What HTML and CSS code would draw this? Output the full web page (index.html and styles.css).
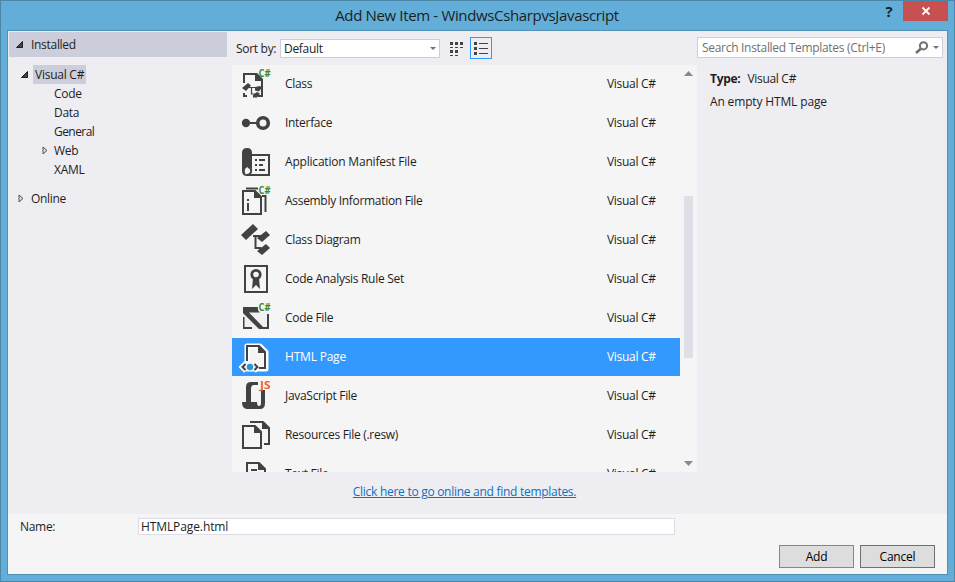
FILE: index.html
```html
<!DOCTYPE html>
<html>

<head>
	<meta charset="utf-8" />
	<title>Add New Item - WindwsCsharpvsJavascript</title>
	<link rel="stylesheet" href="styles.css">
</head>

<body>
	<div class="window">
		<div class="titlebar">
			<h1 class="title">Add New Item - WindwsCsharpvsJavascript</h1>
			<span class="help">?</span>
			<span class="close">
				<svg width="10" height="10" viewBox="0 0 10 10"><path d="M1.5 1.5l7 7M8.5 1.5l-7 7" stroke="#fff" stroke-width="1.8" /></svg>
			</span>
		</div>
		<div class="client">
			<div class="main">
				<!-- categories -->
				<div class="sidebar">
					<div class="installed">
						<svg class="arrow" width="7" height="7"><path d="M6.5 0.5v6h-6z" fill="#444" stroke="#1e1e1e" /></svg>
						<span>Installed</span>
					</div>
					<div class="tree">
						<div class="node root">
							<svg class="arrow" width="7" height="7"><path d="M6.5 0.5v6h-6z" fill="#444" stroke="#1e1e1e" /></svg>
							<span class="current">Visual C#</span>
						</div>
						<div class="node">Code</div>
						<div class="node">Data</div>
						<div class="node general">General</div>
						<div class="node branch">
							<svg class="arrow" width="6" height="9"><path d="M1 1v7l4-3.5z" fill="#ddd" stroke="#555" /></svg>
							<span>Web</span>
						</div>
						<div class="node">XAML</div>
						<div class="node online">
							<svg class="arrow" width="6" height="9"><path d="M1 1v7l4-3.5z" fill="#ddd" stroke="#555" /></svg>
							<span>Online</span>
						</div>
					</div>
				</div>

				<!-- templates -->
				<div class="center">
					<div class="toolbar">
						<label class="sort-label">Sort by:</label>
						<div class="combo">
							<span>Default</span>
							<svg width="6" height="3"><path d="M0 0h6l-3 3z" fill="#717171" /></svg>
						</div>
						<svg class="view-small" width="14" height="15" fill="#424242" shape-rendering="crispEdges">
							<path d="M0 1h3v3H0zM5 1h3v3H5zM10 1h3v3h-3zM0 9h3v3H0zM5 9h3v3H5zM0 6h3v1H0zM5 6h3v1H5zM10 6h3v1h-3zM0 14h3v1H0zM5 14h3v1H5z" />
						</svg>
						<span class="view-list">
							<svg width="14" height="13" fill="#424242" shape-rendering="crispEdges">
								<path d="M0 0h3v3H0zM0 5h3v3H0zM0 10h3v3H0zM5 1h9v1H5zM5 6h9v1H5zM5 11h9v1H5z" />
							</svg>
						</span>
					</div>
					<div class="list">
						<div class="items">
							<div class="item">
								<svg class="icon" viewBox="0 0 32 32">
									<path class="line" d="M4 15V6h11M22 12v16h-4M4 25v3h3" />
									<path class="solid" d="M15 5h2l6 6v2h-8z" />
									<path class="solid" d="M2 20l6-5 3 2.500-5 5.500zM15 19l5-1 2 1.500-3 4-4-1zM13 27l4-3 3 1.500-3 4h-4z" />
									<path class="thin" d="M8 19.500h8M11.500 19.500v6.500h4" />
									<text class="cs" x="18.500" y="9" textLength="12" lengthAdjust="spacingAndGlyphs">C#</text>
								</svg>
								<span class="name">Class</span><span class="lang">Visual C#</span>
							</div>
							<div class="item">
								<svg class="icon" viewBox="0 0 32 32">
									<path class="line" d="M6 16h12" />
									<circle class="solid" cx="6" cy="16" r="4.2" />
									<circle cx="23" cy="16" r="5.3" fill="#f5f5f5" stroke="#424242" stroke-width="3.6" />
								</svg>
								<span class="name">Interface</span><span class="lang">Visual C#</span>
							</div>
							<div class="item">
								<svg class="icon" viewBox="0 0 32 32">
									<path class="line" d="M11 9h18v20H6" />
									<path class="solid" d="M2 7q0-5 5-5t5 5v16q-4-4-7 0-1 4 2 7-5 0-5-5z" />
									<path class="line" d="M8 21q4 1 3 5-1 3-4 3" />
									<path class="line" d="M15 14h2M19 14h6M15 19h2M19 19h4M15 24h2M19 24h6" />
								</svg>
								<span class="name wide">Application Manifest File</span><span class="lang">Visual C#</span>
							</div>
							<div class="item">
								<svg class="icon" viewBox="0 0 32 32">
									<path class="line" d="M6 3.5h12M25.5 10v17M22 11h3" />
									<path class="line" d="M3 6h12l6 6v17H3z" />
									<path class="solid" d="M14 5v8h8zM7 14h2v2H7zM7 18h2v8H7z" />
									<text class="cs" x="18.500" y="9" textLength="12" lengthAdjust="spacingAndGlyphs">C#</text>
								</svg>
								<span class="name">Assembly Information File</span><span class="lang">Visual C#</span>
							</div>
							<div class="item">
								<svg class="icon" viewBox="0 0 32 32">
									<path class="line" d="M13 12h9M15.5 12v12h6" />
									<path class="solid" d="M1 11L13 0l5 5L6 16zM17 14l9-7 4 4-8 7zM17 27l9-7 4 4-8 7z" />
								</svg>
								<span class="name">Class Diagram</span><span class="lang">Visual C#</span>
							</div>
							<div class="item">
								<svg class="icon" viewBox="0 0 32 32">
									<rect class="line" x="5" y="3" width="22" height="26" />
									<circle cx="16" cy="11.5" r="4.2" fill="none" stroke="#424242" stroke-width="2.8" />
									<path class="solid" d="M13 15h6l1 11-4-4-4 4z" />
								</svg>
								<span class="name">Code Analysis Rule Set</span><span class="lang">Visual C#</span>
							</div>
							<div class="item">
								<svg class="icon" viewBox="0 0 32 32">
									<path fill="#f0eff1" d="M3 6h25v21H3z" />
									<path class="solid" d="M3 5h15q-1 3 2 5.500H9L25 27h-6L3 11z" />
									<path class="line" d="M23 26h5V12" />
									<path class="solid" d="M3 15h1.500v10H12v2H3z" />
									<text class="cs" x="18.500" y="9" textLength="12" lengthAdjust="spacingAndGlyphs">C#</text>
								</svg>
								<span class="name">Code File</span><span class="lang">Visual C#</span>
							</div>
							<div class="item selected">
								<svg class="icon" viewBox="0 0 32 32">
									<path fill="#f5f5f5" stroke="#fff" stroke-width="5" stroke-linejoin="round" d="M7 5h13l6 6v17H7z" />
									<path fill="none" stroke="#fff" stroke-width="5" d="M6 22l-4 4 4 4M14 22l4 4-4 4" />
									<path class="line" d="M7 20V5h12l6 6v16h-6" />
									<path class="solid" d="M18 4v8h8z" />
									<path fill="#f5f5f5" d="M4 21h12v9H4z" />
									<path class="line" d="M5.500 23l-3 3 3 3M14.500 23l3 3-3 3" />
									<circle cx="10" cy="26" r="3.200" fill="#1b9bdc" />
								</svg>
								<span class="name wide">HTML Page</span><span class="lang">Visual C#</span>
							</div>
							<div class="item">
								<svg class="icon" viewBox="0 0 32 32">
									<path class="solid" d="M6 22V7q0-5 5-5h7v3h-4q-3 0-3 4v13z" />
									<path class="solid" d="M2 22h15q0 4 2 4t2-3V10h4v13q0 6-5 6H7q-5 0-5-7z" />
									<text class="js" x="20" y="9" textLength="10.500" lengthAdjust="spacingAndGlyphs">JS</text>
								</svg>
								<span class="name">JavaScript File</span><span class="lang">Visual C#</span>
							</div>
							<div class="item">
								<svg class="icon" viewBox="0 0 32 32">
									<path class="line" d="M10 3h13l6 6v16h-5" />
									<path class="solid" d="M22 2v8h8zM14 6v8h8z" />
									<path class="line" d="M3 7h12l6 6v16H3z" />
								</svg>
								<span class="name">Resources File (.resw)</span><span class="lang">Visual C#</span>
							</div>
							<div class="item">
								<svg class="icon" viewBox="0 0 32 32">
									<path class="line" d="M7 5h12l6 6v17H7zM11 12h6M11 16h10" />
									<path class="solid" d="M18 4v8h8z" />
								</svg>
								<span class="name">Text File</span><span class="lang">Visual C#</span>
							</div>
						</div>
						<div class="scrollbar">
							<svg width="9" height="5"><path d="M0 5h9L4.500 0z" fill="#868999" /></svg>
							<div class="thumb"></div>
							<svg width="9" height="5"><path d="M0 0h9L4.500 5z" fill="#868999" /></svg>
						</div>
					</div>
					<div class="online-link"><a href="#">Click here to go online and find templates.</a></div>
				</div>

				<!-- details -->
				<div class="details">
					<div class="search">
						<span>Search Installed Templates (Ctrl+E)</span>
						<svg class="magnifier" width="14" height="13" fill="none" stroke="#717171">
							<circle cx="8.500" cy="4.800" r="3.600" stroke-width="2" />
							<path d="M6 7.500l-5 4.500" stroke-width="2.600" />
						</svg>
						<svg width="6" height="3"><path d="M0 0h6l-3 3z" fill="#717171" /></svg>
					</div>
					<div class="type"><b>Type:</b><span>Visual C#</span></div>
					<div class="description">An empty HTML page</div>
				</div>
			</div>

			<div class="footer">
				<div class="name-row">
					<label class="name-label" for="filename">Name:</label>
					<input id="filename" class="filename" type="text" value="HTMLPage.html" />
				</div>
				<div class="buttons">
					<button class="button primary">Add</button>
					<button class="button">Cancel</button>
				</div>
			</div>
		</div>
	</div>
</body>

</html>
```
FILE: styles.css
```css
* {
	box-sizing: border-box;
}

body {
	margin: 0;
	font: 12px/19px "Open Sans", "Noto Sans", sans-serif;
	letter-spacing: -0.3px;
	color: #1e1e1e;
}

svg {
	display: block;
	flex: none;
}

.window {
	width: 955px;
	height: 582px;
	padding: 0 6px 6px;
	background-color: #62aed8;
	border: 1px solid #4a87a9;
	overflow: hidden;
	white-space: nowrap;
}

/* title bar */
.titlebar {
	display: flex;
	height: 29px;
}

.title {
	flex: 1;
	margin: 0 0 0 72px;
	font-size: 15px;
	font-weight: normal;
	line-height: 29px;
	letter-spacing: -0.35px;
	text-align: center;
}

.help {
	width: 28px;
	font-size: 15px;
	font-weight: bold;
	line-height: 20px;
	text-align: center;
}

.close {
	display: flex;
	align-items: center;
	justify-content: center;
	width: 45px;
	height: 20px;
	background-color: #c75050;
}

.client {
	height: 545px;
	border: 1px solid #4f90b4;
	background-color: #f5f5f5;
}

.main {
	display: flex;
	height: 483px;
	background-color: #eeedf2;
}

/* categories */
.sidebar {
	width: 224px;
	padding: 1px 5px 0 1px;
}

.installed {
	display: flex;
	align-items: center;
	gap: 8px;
	height: 25px;
	padding-left: 7px;
	background-color: #cccedb;
}

.tree {
	padding-top: 8px;
}

.node {
	display: flex;
	align-items: center;
	height: 19px;
	padding-left: 45px;
}

.root {
	gap: 5px;
	padding-left: 12px;
}

.current {
	padding: 0 2px;
	background-color: #cccedb;
	letter-spacing: -0.25px;
}

.general {
	letter-spacing: -0.55px;
}

.branch {
	gap: 6px;
	padding-left: 33px;
}

.online {
	gap: 7px;
	margin-top: 10px;
	padding-left: 9px;
}

/* templates */
.center {
	width: 465px;
}

.toolbar {
	display: flex;
	align-items: center;
	height: 34px;
	padding-left: 4px;
}

.sort-label {
	width: 44px;
}

.combo {
	display: flex;
	align-items: center;
	justify-content: space-between;
	width: 160px;
	height: 19px;
	padding: 0 3px;
	background-color: #fff;
	border: 1px solid #cccedb;
}

.view-small {
	margin: 0 7px 0 10px;
}

.view-list {
	display: flex;
	align-items: center;
	justify-content: center;
	width: 22px;
	height: 22px;
	margin-left: -1px;
	border: 1px solid #3399ff;
}

.list {
	display: flex;
	height: 407px;
	background-color: #f5f5f5;
	overflow: hidden;
}

.items {
	width: 448px;
}

.item {
	display: flex;
	align-items: center;
	height: 38px;
	margin-bottom: 1px;
	padding-left: 8px;
}

.selected {
	background-color: #3399ff;
	color: #fff;
}

.icon {
	width: 32px;
	height: 32px;
	margin-right: 13px;
	overflow: visible;
}

.line {
	fill: none;
	stroke: #424242;
	stroke-width: 2;
}

.thin {
	fill: none;
	stroke: #424242;
	stroke-width: 1.2;
}

.solid {
	fill: #424242;
}

.cs,
.js {
	font: bold 10px "Open Sans", sans-serif;
	letter-spacing: 0;
	fill: #388a34;
}

.js {
	fill: #f0622a;
}

.name,
.lang {
	padding-bottom: 2px;
}

.name {
	width: 322px;
}

.wide {
	letter-spacing: -0.2px;
}

.scrollbar {
	display: flex;
	flex-direction: column;
	align-items: center;
	width: 17px;
	padding: 6px 0;
}

.thumb {
	width: 9px;
	height: 162px;
	margin: 120px 0 103px;
	background-color: #dfdfe8;
}

.online-link {
	padding-top: 10px;
	letter-spacing: -0.28px;
	text-align: center;
}

.online-link a {
	color: #0e70c0;
}

/* details */
.details {
	width: 250px;
}

.search {
	display: flex;
	align-items: center;
	width: 246px;
	height: 21px;
	margin-top: 6px;
	padding: 0 3px 0 4px;
	background-color: #fff;
	border: 1px solid #cccedb;
	color: #717171;
}

.magnifier {
	margin: 0 4px 0 auto;
}

.type {
	display: flex;
	gap: 7px;
	padding: 11px 0 0 13px;
}

.description {
	padding: 4px 0 0 13px;
	letter-spacing: -0.15px;
}

/* name and buttons */
.name-row {
	display: flex;
	padding: 4px 0 0 12px;
}

.name-label {
	width: 118px;
	line-height: 17px;
}

.filename {
	width: 537px;
	height: 17px;
	padding: 0 2px;
	background-color: #fff;
	border: 1px solid #dcdce8;
	font: inherit;
	letter-spacing: -0.1px;
	color: inherit;
}

.buttons {
	display: flex;
	justify-content: flex-end;
	gap: 6px;
	padding: 10px 12px 0 0;
}

.button {
	width: 75px;
	height: 23px;
	padding: 0;
	background-color: #ddd;
	border: 1px solid #707070;
	font: inherit;
	letter-spacing: -0.2px;
	color: #000;
}

.primary {
	border-color: #3399ff;
}
```
